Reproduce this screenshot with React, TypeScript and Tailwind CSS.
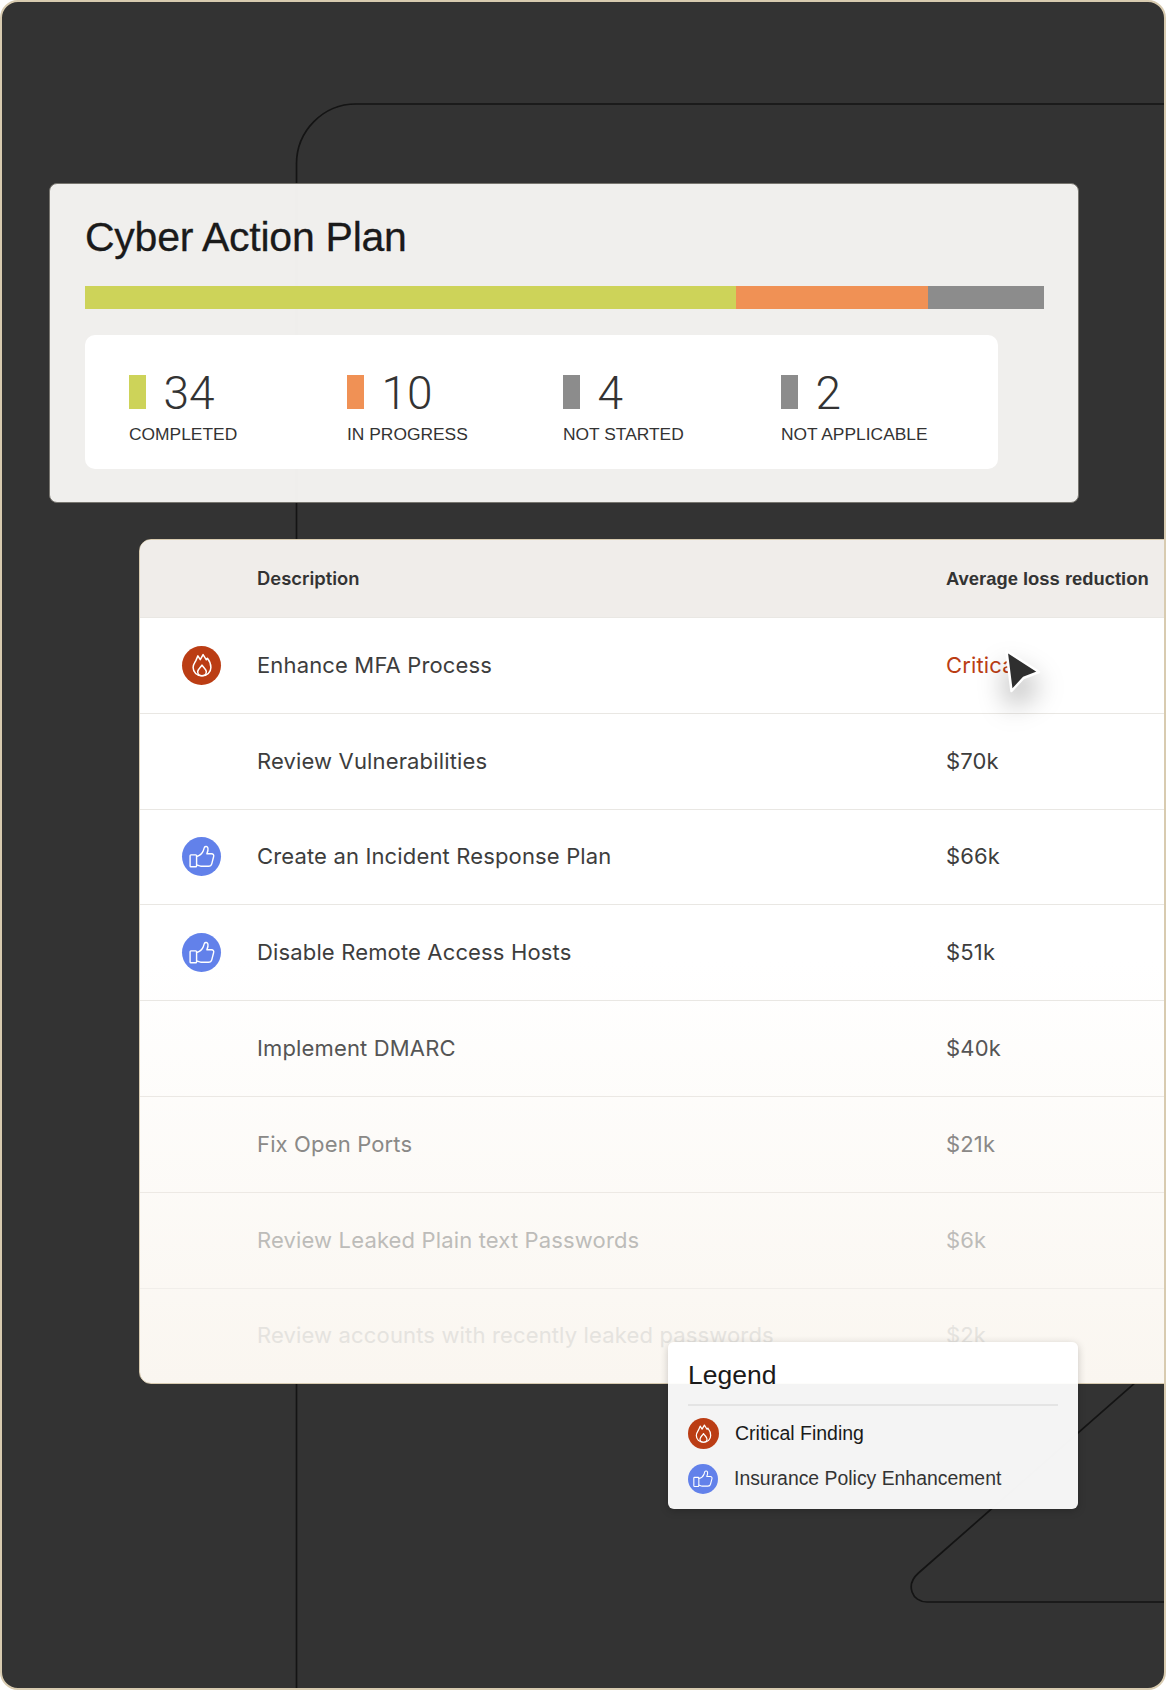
const FONT_A = "font-['Liberation_Sans',sans-serif]";

function Flame({ size }: { size: number }) {
  return (
    <svg width={size} height={size} viewBox="0 0 24 24" fill="none" stroke="#fff" strokeWidth="1.4" strokeLinejoin="round" strokeLinecap="round">
      <path d="M12 22c-4.7 0-8.2-3.3-8.2-7.6 0-2.6 1.3-4.4 2.4-6.2L8.2 3.6l2.2 3.4L13 2.4l3 4.8 1-1.4c1.8 2.2 3.2 5 3.2 8.5C20.200 18.700 16.700 22 12 22z" />
      <path d="M12 22c-2.300 0-4-1.600-4-3.700 0-2.300 2.500-3.700 4-6.200 1.500 2.500 4 3.900 4 6.200 0 2.100-1.700 3.700-4 3.700z" />
    </svg>
  );
}

function Thumb({ size }: { size: number }) {
  return (
    <svg width={size} height={size} viewBox="0 0 24 24" fill="none" stroke="#fff" strokeWidth="1.3" strokeLinejoin="round" strokeLinecap="round">
      <rect x="1" y="10" width="6" height="11" rx="0.8" />
      <path d="M7 11.500c2.600-.6 5.200-2.600 6.200-5.200.4-1.100.6-2.400 1.100-3.300.7-1.100 2.800-.9 3.200.8.400 1.700-.3 3.500-1 5.200h4.300c1.600 0 2.400 1.400 1.900 2.800l-1.700 6.500c-.4 1.400-1.400 2.200-3 2.200H11c-1.600 0-2.600-.8-4-1.200" />
    </svg>
  );
}

function Badge({ kind, className, size }: { kind: "fire" | "up"; className: string; size: number }) {
  return (
    <span className={`flex shrink-0 items-center justify-center rounded-full ${kind === "fire" ? "bg-[#bb3d14]" : "bg-[#6281ea]"} ${className}`}>
      {kind === "fire" ? <Flame size={size} /> : <Thumb size={size} />}
    </span>
  );
}

const stats = [
  { n: "34", label: "COMPLETED", color: "bg-[#cdd359]", w: "w-[218px]" },
  { n: "10", label: "IN PROGRESS", color: "bg-[#f09155]", w: "w-[216px]" },
  { n: "4", label: "NOT STARTED", color: "bg-[#8c8c8c]", w: "w-[218px]" },
  { n: "2", label: "NOT APPLICABLE", color: "bg-[#8c8c8c]", w: "w-auto" },
];

const rows: { d: string; v: string; icon?: "fire" | "up"; text: string; line: string }[] = [
  { d: "Enhance MFA Process", v: "Critical", icon: "fire", text: "text-[#3d3d3d]", line: "border-[#e9e7e3]" },
  { d: "Review Vulnerabilities", v: "$70k", text: "text-[#3d3d3d]", line: "border-[#e9e7e3]" },
  { d: "Create an Incident Response Plan", v: "$66k", icon: "up", text: "text-[#3d3d3d]", line: "border-[#e9e7e3]" },
  { d: "Disable Remote Access Hosts", v: "$51k", icon: "up", text: "text-[#3d3d3d]", line: "border-[#e9e7e3]" },
  { d: "Implement DMARC", v: "$40k", text: "text-[#555555]", line: "border-[#ebe8e4]" },
  { d: "Fix Open Ports", v: "$21k", text: "text-[#8a8987]", line: "border-[#ede9e4]" },
  { d: "Review Leaked Plain text Passwords", v: "$6k", text: "text-[#bdbcb9]", line: "border-[#f1eeea]" },
  { d: "Review accounts with recently leaked passwords", v: "$2k", text: "text-[#e5e3df]", line: "border-transparent" },
];

export default function App() {
  return (
    <div className="relative h-[1690px] w-[1166px] overflow-hidden rounded-[18px] border-2 border-[#d8cbb0] bg-[#333333]">
      <svg className="absolute left-[-2px] top-[-2px]" width="1166" height="1690" fill="none" stroke="#141414" strokeWidth="1.7">
        <path d="M296.5 1690V164C296.5 131 323 104 356 104H1166" />
        <path d="M1166 1355.6L918.5 1573C905 1585 912 1602 927 1602H1166" />
      </svg>

      <div className="relative ml-[47px] mt-[181px] h-[320px] w-[1030px] rounded-[8px] border border-[#77756f] bg-[#f4f3f1]/[0.98] pl-[35px] pt-[30px]">
        <h1 className={`${FONT_A} text-[41px] leading-[46px] tracking-[-0.25px] text-[#1a1a1a] [-webkit-text-stroke:0.3px_#1a1a1a]`}>Cyber Action Plan</h1>
        <div className="mt-[26px] flex h-[23px] w-[959px]">
          <div className="w-[651px] bg-[#cdd359]" />
          <div className="w-[192px] bg-[#f09155]" />
          <div className="w-[116px] bg-[#8c8c8c]" />
        </div>
        <div className="mt-[26px] flex h-[134px] w-[913px] rounded-[10px] bg-white pl-[44px] pt-[40px]">
          {stats.map((s) => (
            <div key={s.label} className={s.w}>
              <div className="flex h-[34px] items-center">
                <span className={`h-[34px] w-[17px] ${s.color}`} />
                <span className="ml-[17.5px] translate-y-px font-['Roboto',sans-serif] text-[46px] font-light leading-[34px] text-[#333333]">{s.n}</span>
              </div>
              <div className={`${FONT_A} mt-[14.5px] whitespace-nowrap text-[17.4px] leading-[20px] text-[#333333]`}>{s.label}</div>
            </div>
          ))}
        </div>
      </div>

      <div className="relative ml-[137px] mt-[36px] h-[845px] w-[1040px]">
        <div className="h-full overflow-hidden rounded-l-[12px] rounded-r-none border border-[#d8cbb0] bg-gradient-to-b from-white from-[50%] to-[#faf6f0]">
          <div className="flex h-[78px] items-center border-b border-[#e9e7e3] bg-[#f0edea] pl-[117px]">
            <div className="w-[689px] font-['Inter',sans-serif] text-[18.4px] font-semibold text-[#333333]">Description</div>
            <div className={`${FONT_A} whitespace-nowrap text-[18.4px] font-bold text-[#333333]`}>Average loss reduction</div>
          </div>
          {rows.map((r) => (
            <div key={r.d} className={`flex h-[95.8px] items-center border-b ${r.line} pl-[42px] font-['Inter',sans-serif] text-[22px] tracking-[0.15px] ${r.text}`}>
              <div className="w-[75px]">{r.icon && <Badge kind={r.icon} size={26} className="h-[39px] w-[39px]" />}</div>
              <div className="w-[689px] whitespace-nowrap">{r.d}</div>
              {r.v === "Critical" ? (
                <div className="w-[63px] overflow-hidden whitespace-nowrap text-[#bb3d14]">{r.v}</div>
              ) : (
                <div>{r.v}</div>
              )}
            </div>
          ))}
        </div>

        <svg className="absolute left-[864px] top-[110px] overflow-visible drop-shadow-[0_16px_14px_rgba(0,0,0,0.35)]" width="40" height="44" viewBox="0 0 40 44">
          <path d="M3.500 2L36 23L20.500 29L8.500 42Z" fill="#2f2f2f" stroke="#fff" strokeWidth="2.500" strokeLinejoin="round" />
        </svg>

        <div className="absolute left-[529px] top-[803px] h-[167px] w-[410px] rounded-[6px] bg-white/95 px-[20px] pt-[16px] shadow-[0_2px_8px_rgba(0,0,0,0.2)]">
          <div className={`${FONT_A} text-[26.5px] leading-[34px] text-[#1a1a1a]`}>Legend</div>
          <div className="mt-[12px] h-px w-[370px] border-b-2 border-[#e4e4e4]" />
          <div className={`${FONT_A} mt-[12px] flex h-[31px] items-center text-[19.5px] text-[#1a1a1a]`}>
            <Badge kind="fire" size={21} className="h-[31px] w-[31px]" />
            <span className="ml-[16px]">Critical Finding</span>
          </div>
          <div className={`${FONT_A} mt-[14px] flex h-[31px] items-center text-[19.4px] text-[#333333]`}>
            <Badge kind="up" size={20} className="h-[30px] w-[30px]" />
            <span className="ml-[16px]">Insurance Policy Enhancement</span>
          </div>
        </div>
      </div>
    </div>
  );
}
